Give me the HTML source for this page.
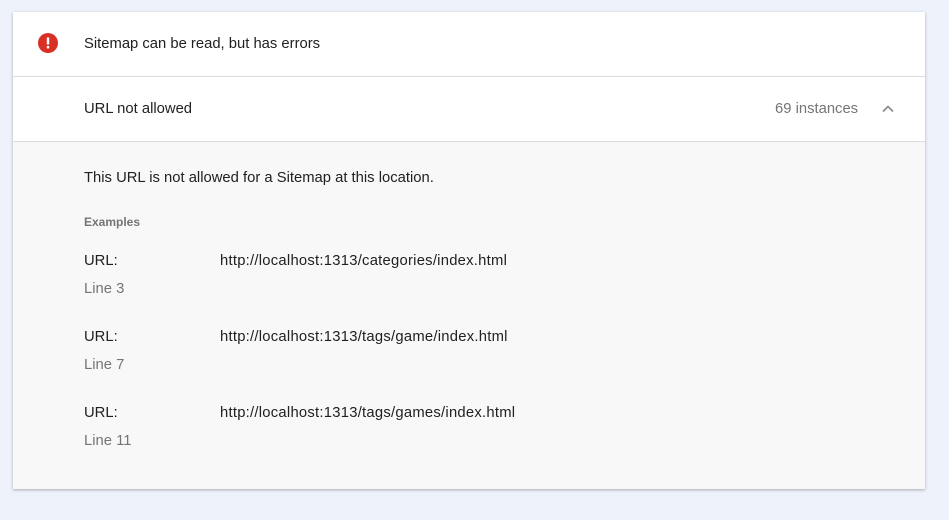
<!DOCTYPE html>
<html><head><meta charset="utf-8"><style>
*{margin:0;padding:0;box-sizing:border-box}
body{width:949px;height:520px;background:#eef3fb;font-family:"Liberation Sans",Arial,sans-serif;color:#212121;font-size:14.8px;position:relative;overflow:hidden}
.card{position:absolute;left:13px;top:12px;width:912px;height:477px;background:#f8f8f8;box-shadow:0 1px 3px rgba(0,0,0,.3)}
.row{position:absolute;left:0;width:912px;background:#fff;border-bottom:1px solid #dadce0}
.t{position:absolute;white-space:nowrap}
.u{letter-spacing:0.25px}
.g{color:#757575}
</style></head><body>
<div class="card">
<div class="row" style="top:0;height:65px">
<svg style="position:absolute;left:25px;top:21px" width="20" height="20" viewBox="0 0 20 20"><circle cx="10" cy="10" r="10" fill="#d93025"/><rect x="8.8" y="4.5" width="2.4" height="7" fill="#fff"/><rect x="8.8" y="13" width="2.4" height="2.4" fill="#fff"/></svg>
<div class="t" style="left:71px;top:24px">Sitemap can be read, but has errors</div>
</div>
<div class="row" style="top:65px;height:65px">
<div class="t" style="left:71px;top:24px">URL not allowed</div>
<div class="t g" style="left:762px;top:24px">69 instances</div>
<svg style="position:absolute;left:868px;top:27px" width="14" height="10" viewBox="0 0 14 10"><path d="M2 7.5L7 2.5L12 7.5" stroke="#888" stroke-width="1.6" fill="none"/></svg>
</div>
<div class="t" style="left:71px;top:158px">This URL is not allowed for a Sitemap at this location.</div>
<div class="t g" style="left:71px;top:203px;font-size:12px;font-weight:bold">Examples</div>
<div class="t" style="left:71px;top:241px">URL:</div>
<div class="t u" style="left:207px;top:241px">http://localhost:1313/categories/index.html</div>
<div class="t g" style="left:71px;top:269px">Line 3</div>
<div class="t" style="left:71px;top:317px">URL:</div>
<div class="t u" style="left:207px;top:317px">http://localhost:1313/tags/game/index.html</div>
<div class="t g" style="left:71px;top:345px">Line 7</div>
<div class="t" style="left:71px;top:393px">URL:</div>
<div class="t u" style="left:207px;top:393px">http://localhost:1313/tags/games/index.html</div>
<div class="t g" style="left:71px;top:421px">Line 11</div>
</div>
</body></html>
